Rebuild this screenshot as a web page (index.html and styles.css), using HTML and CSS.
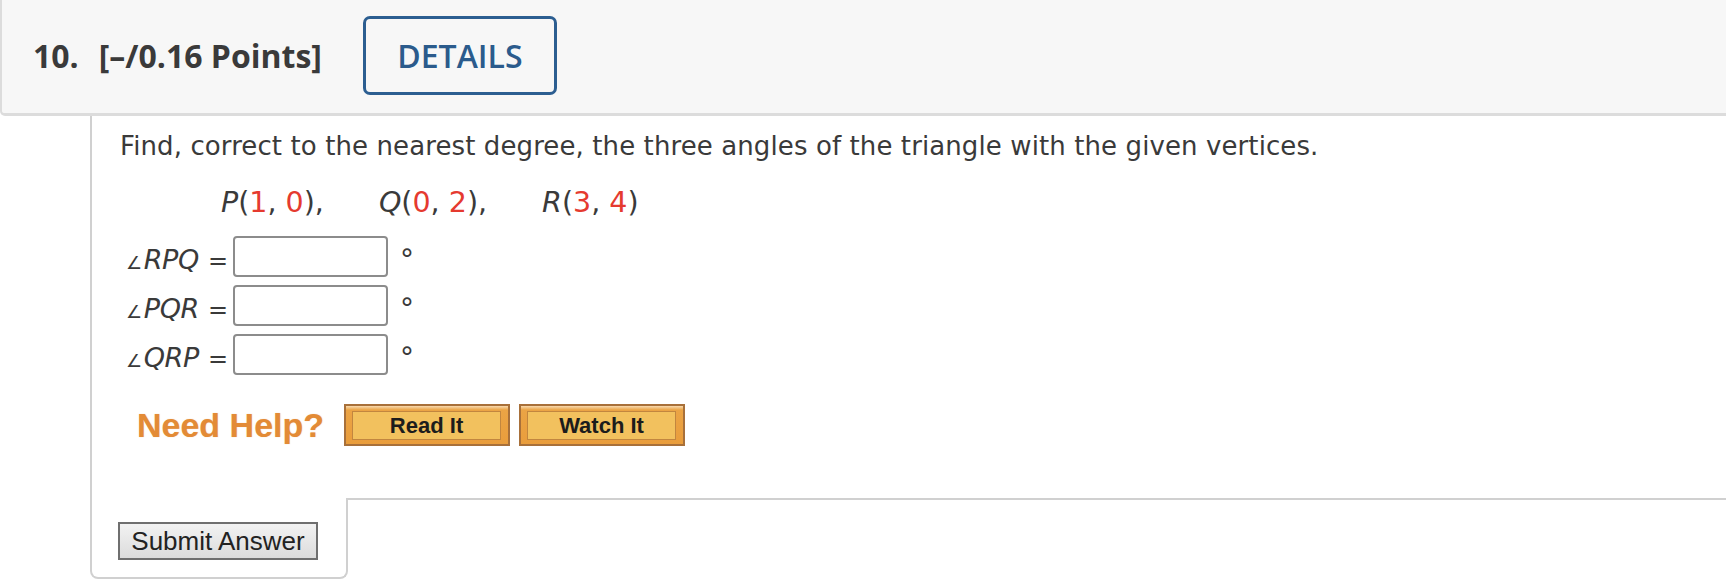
FILE: index.html
```html
<!DOCTYPE html>
<html>
<head>
<meta charset="utf-8">
<link rel="stylesheet" href="styles.css">
</head>
<body>
<div class="header">
  <span class="qnum">10.</span>
  <span class="points">[–/0.16 Points]</span>
  <button class="details">DETAILS</button>
</div>
<div class="question">
  <p class="prompt">Find, correct to the nearest degree, the three angles of the triangle with the given vertices.</p>
  <p class="vertices"><span class="pt"><i>P</i>(<span class="red">1</span>, <span class="red">0</span>),</span><span class="pt"><i>Q</i>(<span class="red">0</span>, <span class="red">2</span>),</span><span class="pt"><i>R</i>(<span class="red">3</span>, <span class="red">4</span>)</span></p>
  <div class="rows">
    <div class="row"><span class="lbl"><span class="ang">∠</span><i>RPQ</i></span><span class="eq">=</span><input class="ans" type="text"><span class="deg">°</span></div>
    <div class="row"><span class="lbl"><span class="ang">∠</span><i>PQR</i></span><span class="eq">=</span><input class="ans" type="text"><span class="deg">°</span></div>
    <div class="row"><span class="lbl"><span class="ang">∠</span><i>QRP</i></span><span class="eq">=</span><input class="ans" type="text"><span class="deg">°</span></div>
  </div>
  <div class="help">
    <span class="need">Need Help?</span>
    <button class="hbtn"><span class="hin">Read It</span></button>
    <button class="hbtn"><span class="hin">Watch It</span></button>
  </div>
</div>
<div class="submit-tab">
  <button class="submit">Submit Answer</button>
</div>
</body>
</html>
```
FILE: styles.css
```css
html, body {
  margin: 0;
  padding: 0;
  background: #ffffff;
}
body {
  font-family: "DejaVu Sans", Verdana, sans-serif;
  color: #333333;
}
.header {
  box-sizing: border-box;
  height: 116px;
  display: flex;
  align-items: center;
  padding-left: 31px;
  padding-bottom: 2px;
  background: #f7f7f7;
  border-left: 2px solid #dcdcdc;
  border-bottom: 3px solid #dcdcdc;
  border-bottom-left-radius: 5px;
  font-family: "Open Sans", sans-serif;
}
.qnum, .points {
  font-size: 32px;
  font-weight: 700;
  color: #3a3a3a;
}
.points {
  margin-left: 20px;
}
.details {
  box-sizing: border-box;
  margin-left: 41px;
  width: 194px;
  height: 79px;
  border: 3px solid #2c5e91;
  border-radius: 7px;
  background: transparent;
  font-family: "Open Sans", sans-serif;
  font-size: 32px;
  font-weight: 600;
  color: #2b5b8c;
  padding: 0;
}
.question {
  margin-left: 90px;
  border-left: 2px solid #d0d0d0;
  border-bottom: 2px solid #d0d0d0;
  padding: 15px 0 52px 28px;
}
.prompt {
  margin: 0;
  font-family: "DejaVu Sans", Verdana, sans-serif;
  font-size: 26px;
  letter-spacing: 0.1px;
  line-height: 30px;
  color: #3a3a3a;
}
.vertices {
  margin: 25px 0 0 101px;
  font-size: 28.5px;
  line-height: 34px;
  color: #3a3a3a;
  display: flex;
  gap: 55px;
}
.red {
  color: #e53a2f;
}
.rows {
  margin-top: 16px;
  display: flex;
  flex-direction: column;
  gap: 8px;
}
.row {
  display: flex;
  align-items: baseline;
  height: 41px;
  font-size: 27px;
  line-height: 47px;
  color: #3a3a3a;
}
.lbl {
  width: 82px;
  padding-left: 6px;
  letter-spacing: -0.4px;
}
.ang {
  font-size: 18px;
  margin-right: 2px;
}
.eq {
  width: 25px;
  font-size: 24px;
  text-align: left;
}
.ans {
  box-sizing: border-box;
  align-self: flex-start;
  margin: 0;
  width: 155px;
  height: 41px;
  border: 2px solid #8c8c8c;
  border-radius: 4px;
  background: #ffffff;
  outline: none;
}
.deg {
  margin-left: 12px;
  font-size: 28px;
}
.help {
  margin-top: 29px;
  display: flex;
  align-items: center;
  height: 42px;
}
.need {
  margin-left: 17px;
  font-family: "Liberation Sans", Arial, sans-serif;
  font-weight: 700;
  font-size: 34px;
  color: #e38b36;
  text-shadow: 0 0 1px rgba(227, 139, 54, 0.5);
  margin-right: 20px;
}
.hbtn {
  box-sizing: border-box;
  width: 166px;
  height: 42px;
  margin-right: 9px;
  padding: 5px 7px 4px 6px;
  border: 2px solid #a8703a;
  background: linear-gradient(#f8d9ae 0px, #eba445 4px, #e99d3c 100%);
  display: flex;
}
.hin {
  flex: 1;
  display: flex;
  align-items: center;
  justify-content: center;
  border: 1px solid #c2863f;
  background: #f2c15e;
  font-family: "Liberation Sans", Arial, sans-serif;
  font-weight: 700;
  font-size: 22px;
  color: #1c1c1c;
}
.submit-tab {
  box-sizing: border-box;
  margin-left: 90px;
  margin-top: -2px;
  width: 258px;
  height: 81px;
  background: #ffffff;
  border-left: 2px solid #d0d0d0;
  border-right: 2px solid #d0d0d0;
  border-bottom: 2px solid #d0d0d0;
  border-bottom-left-radius: 8px;
  border-bottom-right-radius: 8px;
  padding: 24px 0 0 26px;
}
.submit {
  box-sizing: border-box;
  width: 200px;
  height: 38px;
  border: 2px solid #6f6f6f;
  background: linear-gradient(#f2f2f2, #dcdcdc);
  font-family: "Liberation Sans", Arial, sans-serif;
  font-size: 26px;
  color: #222222;
  padding: 0;
}
```
